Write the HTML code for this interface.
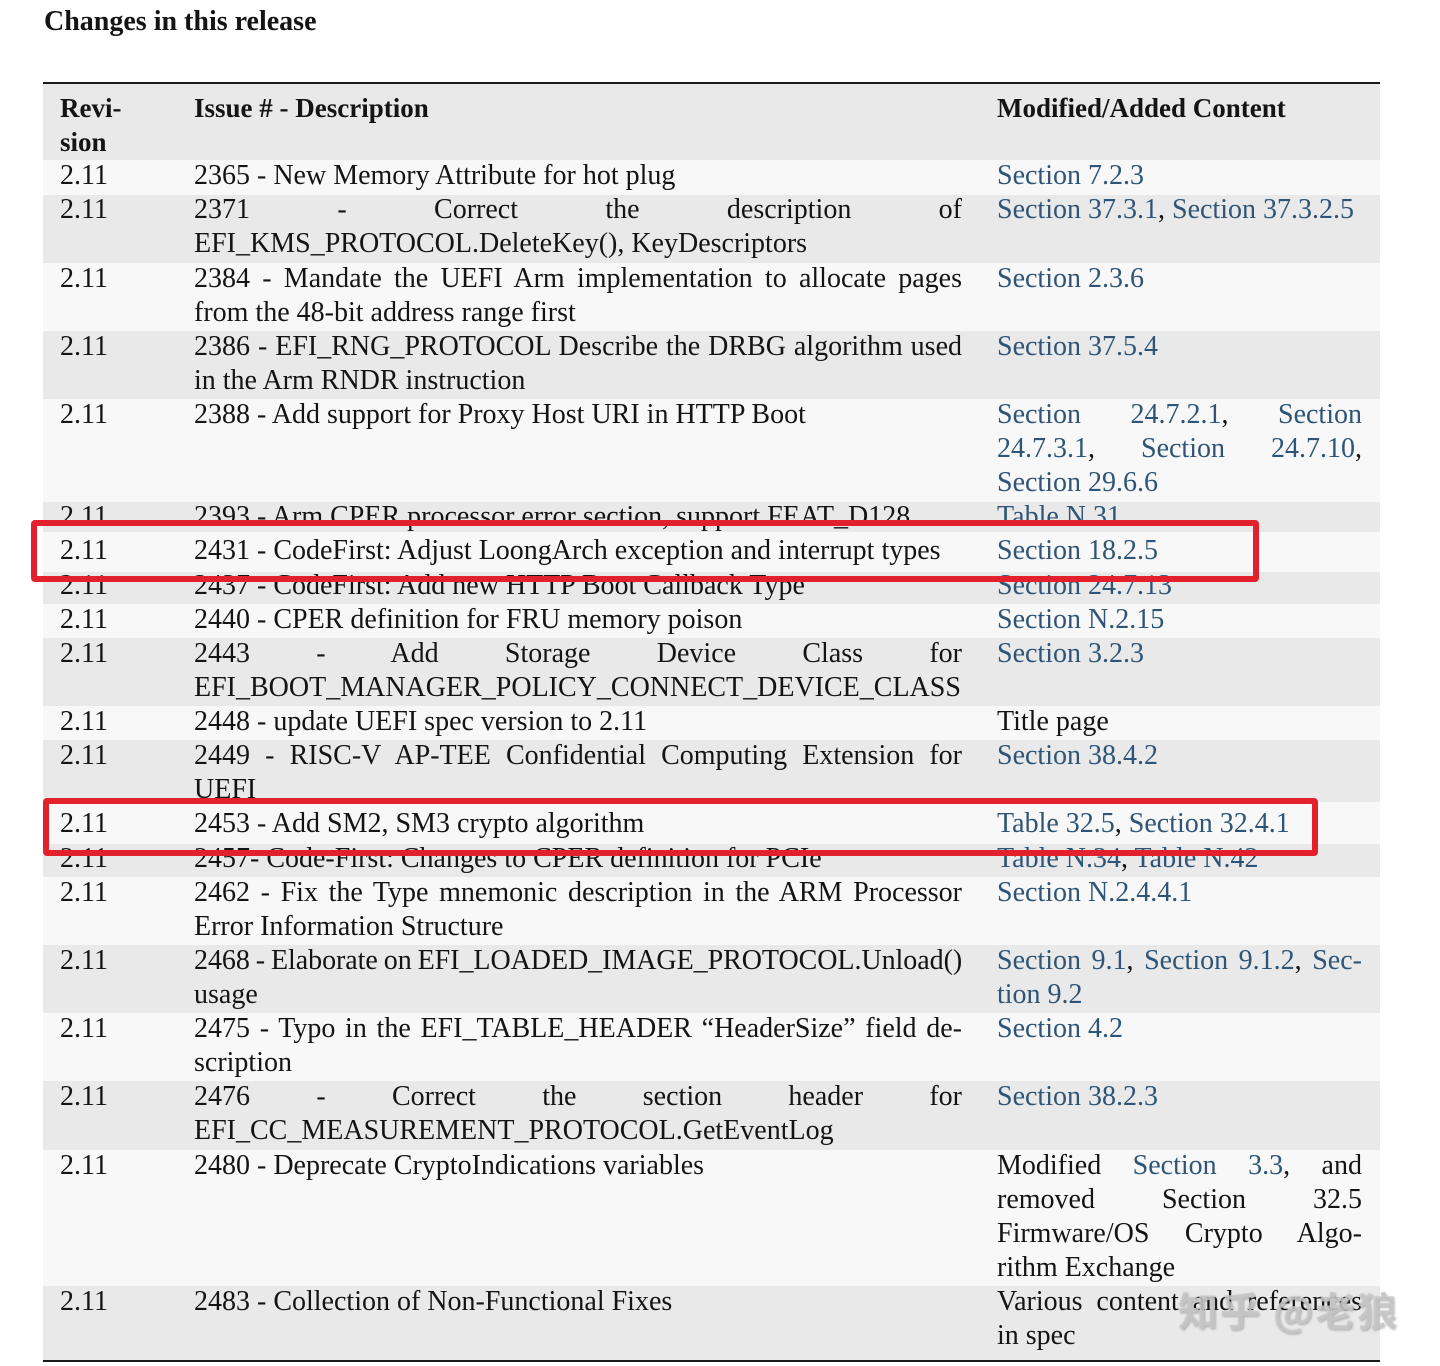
<!DOCTYPE html>
<html><head><meta charset="utf-8">
<style>
html,body{margin:0;padding:0;background:#fff;}
body{width:1440px;height:1366px;position:relative;overflow:hidden;font-family:"Liberation Serif","Noto Serif CJK SC",serif;color:#141414;font-size:28px;}
.t{position:absolute;left:44px;top:4px;font-weight:bold;font-size:28px;line-height:36px;}
.r{position:absolute;left:43px;width:1337px;overflow:hidden;}
.L{background:#f8f8f8;}
.D{background:#e9e9e9;}
.l{position:absolute;height:34px;line-height:34px;white-space:nowrap;}
.c1{left:17px;}
.c2{left:151px;width:768px;}
.c3{left:954px;width:365px;}
.j{text-align:justify;text-align-last:justify;white-space:normal;}
.a{color:#2e5577;}
.b{font-weight:bold;font-size:27px;}
.rule{position:absolute;left:43px;width:1337px;height:2px;background:#1a1a1a;}
.box{position:absolute;border:6px solid #e3212d;border-radius:4px;}
.wm{position:absolute;left:1178px;top:1280px;font-family:"Noto Sans CJK SC",sans-serif;font-size:40px;font-weight:bold;color:rgba(200,200,200,0.85);letter-spacing:2px;text-shadow:1px 1px 2px rgba(80,80,80,0.4);}
</style></head><body>
<div class="t">Changes in this release</div>
<div class="rule" style="top:82px"></div>

<div class="r D" style="top:84px;height:76px">
<div class="l c1 b" style="top:7px">Revi-</div>
<div class="l c1 b" style="top:41px">sion</div>
<div class="l c2 b" style="top:7px">Issue # - Description</div>
<div class="l c3 b" style="top:7px">Modified/Added Content</div>
</div>

<div class="r L" style="top:160px;height:35px">
<div class="l c1" style="top:-1px">2.11</div>
<div class="l c2" style="top:-1px">2365 - New Memory Attribute for hot plug</div>
<div class="l c3 a" style="top:-1px">Section 7.2.3</div>
</div>

<div class="r D" style="top:195px;height:68px">
<div class="l c1" style="top:-2px">2.11</div>
<div class="l c2 j" style="top:-2px">2371 - Correct the description of</div>
<div class="l c2" style="top:32px">EFI_KMS_PROTOCOL.DeleteKey(), KeyDescriptors</div>
<div class="l c3 a" style="top:-2px">Section 37.3.1<span style="color:#141414">,</span> Section 37.3.2.5</div>
</div>

<div class="r L" style="top:263px;height:68px">
<div class="l c1" style="top:-1px">2.11</div>
<div class="l c2 j" style="top:-1px">2384 - Mandate the UEFI Arm implementation to allocate pages</div>
<div class="l c2" style="top:33px">from the 48-bit address range first</div>
<div class="l c3 a" style="top:-1px">Section 2.3.6</div>
</div>

<div class="r D" style="top:331px;height:68px">
<div class="l c1" style="top:-1px">2.11</div>
<div class="l c2 j" style="top:-1px">2386 - EFI_RNG_PROTOCOL Describe the DRBG algorithm used</div>
<div class="l c2" style="top:33px">in the Arm RNDR instruction</div>
<div class="l c3 a" style="top:-1px">Section 37.5.4</div>
</div>

<div class="r L" style="top:399px;height:103px">
<div class="l c1" style="top:-1px">2.11</div>
<div class="l c2" style="top:-1px">2388 - Add support for Proxy Host URI in HTTP Boot</div>
<div class="l c3 a j" style="top:-1px">Section 24.7.2.1<span style="color:#141414">,</span> Section</div>
<div class="l c3 a j" style="top:33px">24.7.3.1<span style="color:#141414">,</span> Section 24.7.10<span style="color:#141414">,</span></div>
<div class="l c3 a" style="top:67px">Section 29.6.6</div>
</div>

<div class="r D" style="top:502px;height:30px">
<div class="l c1" style="top:-2px">2.11</div>
<div class="l c2" style="top:-2px">2393 - Arm CPER processor error section, support FEAT_D128</div>
<div class="l c3 a" style="top:-2px">Table N.31</div>
</div>

<div class="r L" style="top:532px;height:40px">
<div class="l c1" style="top:2px">2.11</div>
<div class="l c2" style="top:2px">2431 - CodeFirst: Adjust LoongArch exception and interrupt types</div>
<div class="l c3 a" style="top:2px">Section 18.2.5</div>
</div>

<div class="r D" style="top:572px;height:32px">
<div class="l c1" style="top:-3px">2.11</div>
<div class="l c2" style="top:-3px">2437 - CodeFirst: Add new HTTP Boot Callback Type</div>
<div class="l c3 a" style="top:-3px">Section 24.7.13</div>
</div>

<div class="r L" style="top:604px;height:34px">
<div class="l c1" style="top:-1px">2.11</div>
<div class="l c2" style="top:-1px">2440 - CPER definition for FRU memory poison</div>
<div class="l c3 a" style="top:-1px">Section N.2.15</div>
</div>

<div class="r D" style="top:638px;height:68px">
<div class="l c1" style="top:-1px">2.11</div>
<div class="l c2 j" style="top:-1px">2443 - Add Storage Device Class for</div>
<div class="l c2" style="top:33px">EFI_BOOT_MANAGER_POLICY_CONNECT_DEVICE_CLASS</div>
<div class="l c3 a" style="top:-1px">Section 3.2.3</div>
</div>

<div class="r L" style="top:706px;height:34px">
<div class="l c1" style="top:-1px">2.11</div>
<div class="l c2" style="top:-1px">2448 - update UEFI spec version to 2.11</div>
<div class="l c3" style="top:-1px">Title page</div>
</div>

<div class="r D" style="top:740px;height:62px">
<div class="l c1" style="top:-1px">2.11</div>
<div class="l c2 j" style="top:-1px">2449 - RISC-V AP-TEE Confidential Computing Extension for</div>
<div class="l c2" style="top:33px">UEFI</div>
<div class="l c3 a" style="top:-1px">Section 38.4.2</div>
</div>

<div class="r L" style="top:802px;height:42px">
<div class="l c1" style="top:5px">2.11</div>
<div class="l c2" style="top:5px">2453 - Add SM2, SM3 crypto algorithm</div>
<div class="l c3 a" style="top:5px">Table 32.5<span style="color:#141414">,</span> Section 32.4.1</div>
</div>

<div class="r D" style="top:844px;height:33px">
<div class="l c1" style="top:-2px">2.11</div>
<div class="l c2" style="top:-2px">2457- Code-First: Changes to CPER definition for PCIe</div>
<div class="l c3 a" style="top:-2px">Table N.34<span style="color:#141414">,</span> Table N.42</div>
</div>

<div class="r L" style="top:877px;height:68px">
<div class="l c1" style="top:-1px">2.11</div>
<div class="l c2 j" style="top:-1px">2462 - Fix the Type mnemonic description in the ARM Processor</div>
<div class="l c2" style="top:33px">Error Information Structure</div>
<div class="l c3 a" style="top:-1px">Section N.2.4.4.1</div>
</div>

<div class="r D" style="top:945px;height:68px">
<div class="l c1" style="top:-1px">2.11</div>
<div class="l c2" style="top:-1px;letter-spacing:-0.05px;word-spacing:-1px">2468 - Elaborate on EFI_LOADED_IMAGE_PROTOCOL.Unload()</div>
<div class="l c2" style="top:33px">usage</div>
<div class="l c3 a j" style="top:-1px">Section 9.1<span style="color:#141414">,</span> Section 9.1.2<span style="color:#141414">,</span> Sec-</div>
<div class="l c3 a" style="top:33px">tion 9.2</div>
</div>

<div class="r L" style="top:1013px;height:68px">
<div class="l c1" style="top:-1px">2.11</div>
<div class="l c2 j" style="top:-1px">2475 - Typo in the EFI_TABLE_HEADER “HeaderSize” field de-</div>
<div class="l c2" style="top:33px">scription</div>
<div class="l c3 a" style="top:-1px">Section 4.2</div>
</div>

<div class="r D" style="top:1081px;height:69px">
<div class="l c1" style="top:-1px">2.11</div>
<div class="l c2 j" style="top:-1px">2476 - Correct the section header for</div>
<div class="l c2" style="top:33px">EFI_CC_MEASUREMENT_PROTOCOL.GetEventLog</div>
<div class="l c3 a" style="top:-1px">Section 38.2.3</div>
</div>

<div class="r L" style="top:1150px;height:136px">
<div class="l c1" style="top:-1px">2.11</div>
<div class="l c2" style="top:-1px">2480 - Deprecate CryptoIndications variables</div>
<div class="l c3 j" style="top:-1px">Modified <span class="a">Section 3.3</span>, and</div>
<div class="l c3 j" style="top:33px">removed Section 32.5</div>
<div class="l c3 j" style="top:67px">Firmware/OS Crypto Algo-</div>
<div class="l c3" style="top:101px">rithm Exchange</div>
</div>

<div class="r D" style="top:1286px;height:74px">
<div class="l c1" style="top:-1px">2.11</div>
<div class="l c2" style="top:-1px">2483 - Collection of Non-Functional Fixes</div>
<div class="l c3 j" style="top:-1px">Various content and references</div>
<div class="l c3" style="top:33px">in spec</div>
</div>

<div class="rule" style="top:1360px"></div>

<div class="box" style="left:31px;top:520px;width:1216px;height:50px"></div>
<div class="box" style="left:43px;top:798px;width:1263px;height:46px"></div>

<div class="wm">知乎 @老狼</div>
</body></html>
